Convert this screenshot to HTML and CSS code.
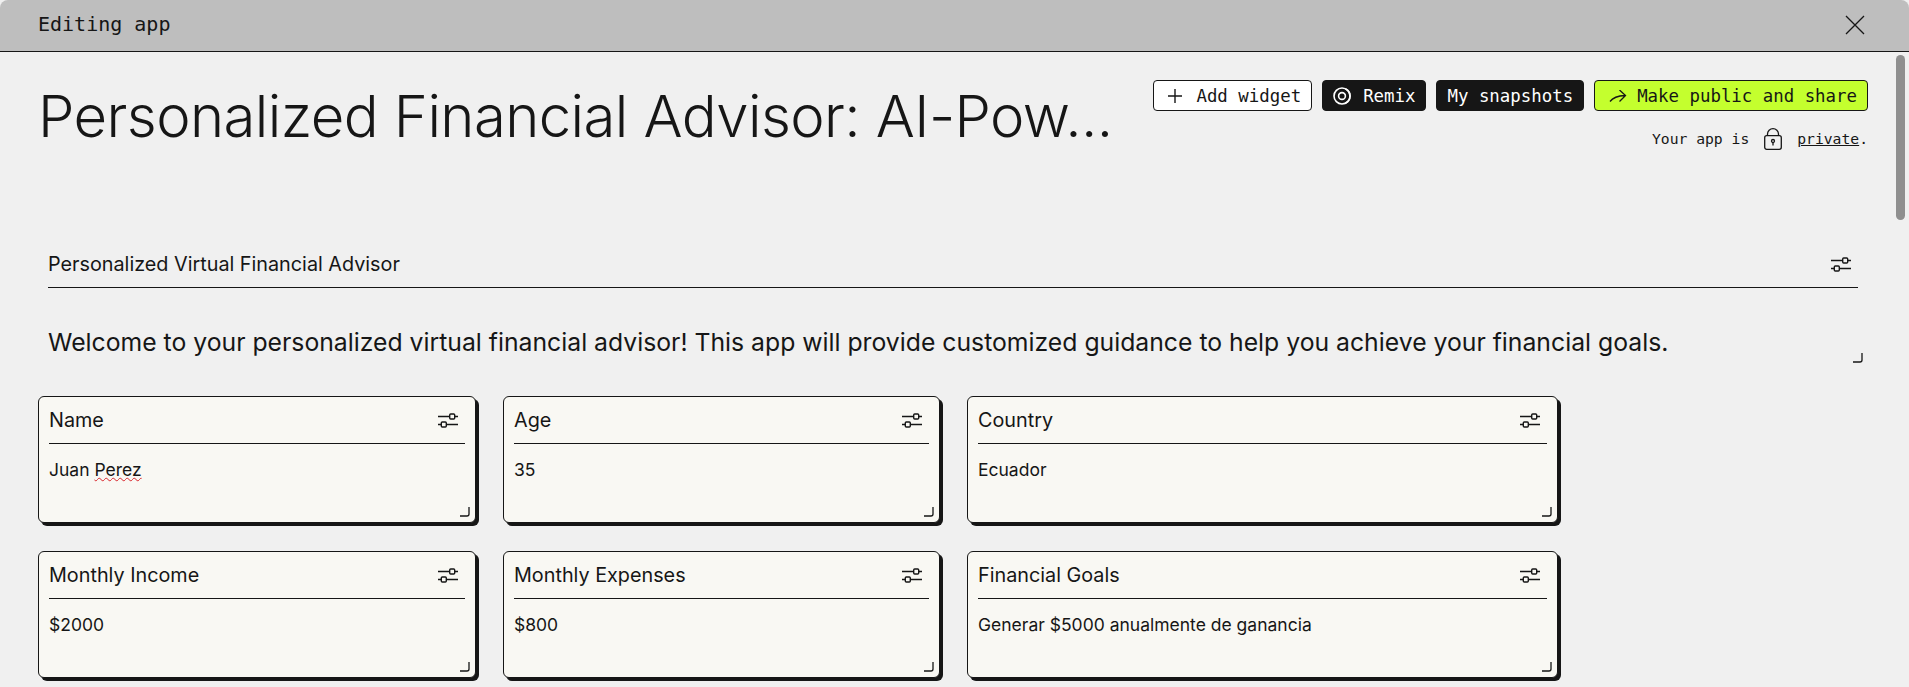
FILE: index.html
```html
<!DOCTYPE html>
<html lang="en">
<head>
    <meta charset="UTF-8">
    <meta name="viewport" content="width=device-width, initial-scale=1.0">
    <title>Editing app</title>
    <link rel="stylesheet" href="styles.css">
</head>
<body>
    <svg class="sprites" width="0" height="0">
        <symbol id="sliders" viewBox="0 0 20 15">
            <path d="M0 3.500H11M17 3.500H20M0 11.500H3M9 11.500H20" fill="none" stroke="currentColor" stroke-width="1.4"/>
            <rect x="11.700" y="1" width="5" height="5" rx="1" fill="none" stroke="currentColor" stroke-width="1.4"/>
            <rect x="3.300" y="9" width="5" height="5" rx="1" fill="none" stroke="currentColor" stroke-width="1.4"/>
        </symbol>
        <symbol id="handle" viewBox="0 0 10 10">
            <path d="M0 9H7Q9 9 9 7V0" fill="none" stroke="currentColor" stroke-width="1.3"/>
        </symbol>
    </svg>

    <header class="topbar">
        <span class="topbar-title">Editing app</span>
        <svg class="close-icon" width="20" height="20" viewBox="0 0 20 20">
            <path d="M1 1L19 19M19 1L1 19" fill="none" stroke="currentColor" stroke-width="1.3"/>
        </svg>
    </header>

    <div class="layout">
        <main class="page">
            <div class="page-header">
                <h1 class="app-title">Personalized Financial Advisor: AI-Pow...</h1>
                <div class="actions">
                    <div class="buttons">
                        <button class="btn btn-light">
                            <svg width="14" height="14" viewBox="0 0 14 14"><path d="M7 0V14M0 7H14" fill="none" stroke="currentColor" stroke-width="1.4"/></svg>
                            <span>Add widget</span>
                        </button>
                        <button class="btn btn-dark">
                            <svg width="20" height="20" viewBox="0 0 20 20" fill="none" stroke="currentColor" stroke-width="1.6">
                                <circle cx="9" cy="10" r="8"/>
                                <circle cx="9" cy="10" r="3.400"/>
                                <path d="M12.500 2.800A8 8 0 0 1 12.500 17.200"/>
                            </svg>
                            <span>Remix</span>
                        </button>
                        <button class="btn btn-dark">My snapshots</button>
                        <button class="btn btn-lime">
                            <svg width="18" height="12" viewBox="0 0 18 12" fill="none" stroke="currentColor" stroke-width="1.3">
                                <path d="M1 11.500Q5 6 16 5.500M10.500 0L16.500 5.500L10.500 11.500"/>
                            </svg>
                            <span>Make public and share</span>
                        </button>
                    </div>
                    <div class="status">
                        <span>Your app is</span>
                        <svg class="lock" width="18" height="22" viewBox="0 0 18 22" fill="none" stroke="currentColor" stroke-width="1.3">
                            <rect x="0.700" y="7.700" width="16.600" height="13.600" rx="2"/>
                            <path d="M3.500 7.700V6A5.500 5.300 0 0 1 14.500 6V7.700"/>
                            <circle cx="9" cy="13" r="1.500"/>
                            <path d="M9 14.500V17.500"/>
                        </svg>
                        <span><a class="status-link" href="#">private</a>.</span>
                    </div>
                </div>
            </div>

            <section class="widget widget-text">
                <div class="widget-head">
                    <span>Personalized Virtual Financial Advisor</span>
                    <svg class="sliders"><use href="#sliders"/></svg>
                </div>
                <p class="welcome">Welcome to your personalized virtual financial advisor! This app will provide customized guidance to help you achieve your financial goals.</p>
                <svg class="handle"><use href="#handle"/></svg>
            </section>

            <div class="row">
                <section class="widget card col-a">
                    <div class="widget-head"><span>Name</span><svg class="sliders"><use href="#sliders"/></svg></div>
                    <p class="value">Juan <span class="misspelled">Perez</span></p>
                    <svg class="handle"><use href="#handle"/></svg>
                </section>
                <section class="widget card col-b">
                    <div class="widget-head"><span>Age</span><svg class="sliders"><use href="#sliders"/></svg></div>
                    <p class="value">35</p>
                    <svg class="handle"><use href="#handle"/></svg>
                </section>
                <section class="widget card col-c">
                    <div class="widget-head"><span>Country</span><svg class="sliders"><use href="#sliders"/></svg></div>
                    <p class="value">Ecuador</p>
                    <svg class="handle"><use href="#handle"/></svg>
                </section>
            </div>

            <div class="row">
                <section class="widget card col-a">
                    <div class="widget-head"><span>Monthly Income</span><svg class="sliders"><use href="#sliders"/></svg></div>
                    <p class="value">$2000</p>
                    <svg class="handle"><use href="#handle"/></svg>
                </section>
                <section class="widget card col-b">
                    <div class="widget-head"><span>Monthly Expenses</span><svg class="sliders"><use href="#sliders"/></svg></div>
                    <p class="value">$800</p>
                    <svg class="handle"><use href="#handle"/></svg>
                </section>
                <section class="widget card col-c">
                    <div class="widget-head"><span>Financial Goals</span><svg class="sliders"><use href="#sliders"/></svg></div>
                    <p class="value">Generar $5000 anualmente de ganancia</p>
                    <svg class="handle"><use href="#handle"/></svg>
                </section>
            </div>
        </main>

        <div class="scrollbar"><div class="scrollbar-thumb"></div></div>
    </div>
</body>
</html>
```

FILE: styles.css
```css
html, body {
    height: 100%;
}

body {
    margin: 0;
    overflow: hidden;
    background-color: #f0f0f0;
    color: #161616;
    font-family: "Inter", "Liberation Sans", sans-serif;
}

.sprites {
    display: none;
}

/* top bar */
.topbar {
    display: flex;
    justify-content: space-between;
    align-items: center;
    box-sizing: border-box;
    height: 52px;
    padding: 0 44px 0 38px;
    background-color: #bebebe;
    border-bottom: 1px solid #161616;
    border-radius: 8px 8px 0 0;
}

.topbar-title {
    margin-bottom: 4px;
    font-family: "DejaVu Sans Mono", monospace;
    font-size: 20px;
}

.close-icon {
    display: block;
    margin-top: -1px;
}

.layout {
    display: flex;
}

.page {
    flex: 1;
    min-width: 0;
    padding: 28px 28px 0 38px;
}

.scrollbar {
    width: 13px;
}

.scrollbar-thumb {
    width: 9px;
    height: 165px;
    margin-top: 3px;
    background-color: #8f8f8f;
    border-radius: 5px;
}

/* title and actions */
.page-header {
    display: flex;
    justify-content: space-between;
    align-items: flex-start;
    height: 72px;
    margin-bottom: 89px;
}

.app-title {
    margin: 0;
    font-size: 58px;
    font-weight: 300;
    line-height: 72px;
    letter-spacing: -0.58px;
    white-space: nowrap;
}

.actions {
    display: flex;
    flex-direction: column;
    align-items: flex-end;
    gap: 17px;
}

.buttons {
    display: flex;
    gap: 10px;
}

.btn {
    display: flex;
    align-items: center;
    box-sizing: border-box;
    height: 31px;
    padding: 0 10px;
    gap: 10px;
    border: 1px solid #161616;
    border-radius: 4px;
    font-family: "DejaVu Sans Mono", monospace;
    font-size: 17.400px;
}

.btn-light {
    background-color: #fff;
    color: #161616;
    padding-left: 14px;
    gap: 14px;
}

.btn-dark {
    background-color: #161616;
    color: #fff;
}

.btn-lime {
    background-color: #c4ff2e;
    color: #161616;
    padding-left: 14px;
}

.status {
    display: flex;
    align-items: center;
    gap: 15px;
    height: 21px;
    font-family: "DejaVu Sans Mono", monospace;
    font-size: 14.700px;
}

.status-link {
    color: #161616;
}

/* widgets */
.widget {
    position: relative;
    box-sizing: border-box;
    height: 127px;
    padding: 0 10px;
    margin-bottom: 28px;
}

.widget-head {
    display: flex;
    justify-content: space-between;
    align-items: center;
    height: 46px;
    padding-right: 7px;
    border-bottom: 1px solid #161616;
    font-size: 19.800px;
}

.sliders {
    width: 20px;
    height: 15px;
}

.handle {
    position: absolute;
    right: 5px;
    bottom: 5px;
    width: 10px;
    height: 10px;
}

.welcome {
    margin: 0;
    padding-top: 37px;
    font-size: 24.750px;
    line-height: 34px;
    white-space: nowrap;
}

.row {
    display: flex;
    gap: 27px;
}

.card {
    border: 1px solid #161616;
    border-radius: 6px;
    background-color: #f9f8f3;
    box-shadow: 3px 3px 0 #161616;
}

.col-a {
    width: 438px;
}

.col-b {
    width: 437px;
}

.col-c {
    width: 591px;
}

.value {
    margin: 0;
    padding-top: 16px;
    font-size: 17.500px;
    line-height: 20px;
}

.misspelled {
    text-decoration: underline wavy #d8262c 1px;
}
```
